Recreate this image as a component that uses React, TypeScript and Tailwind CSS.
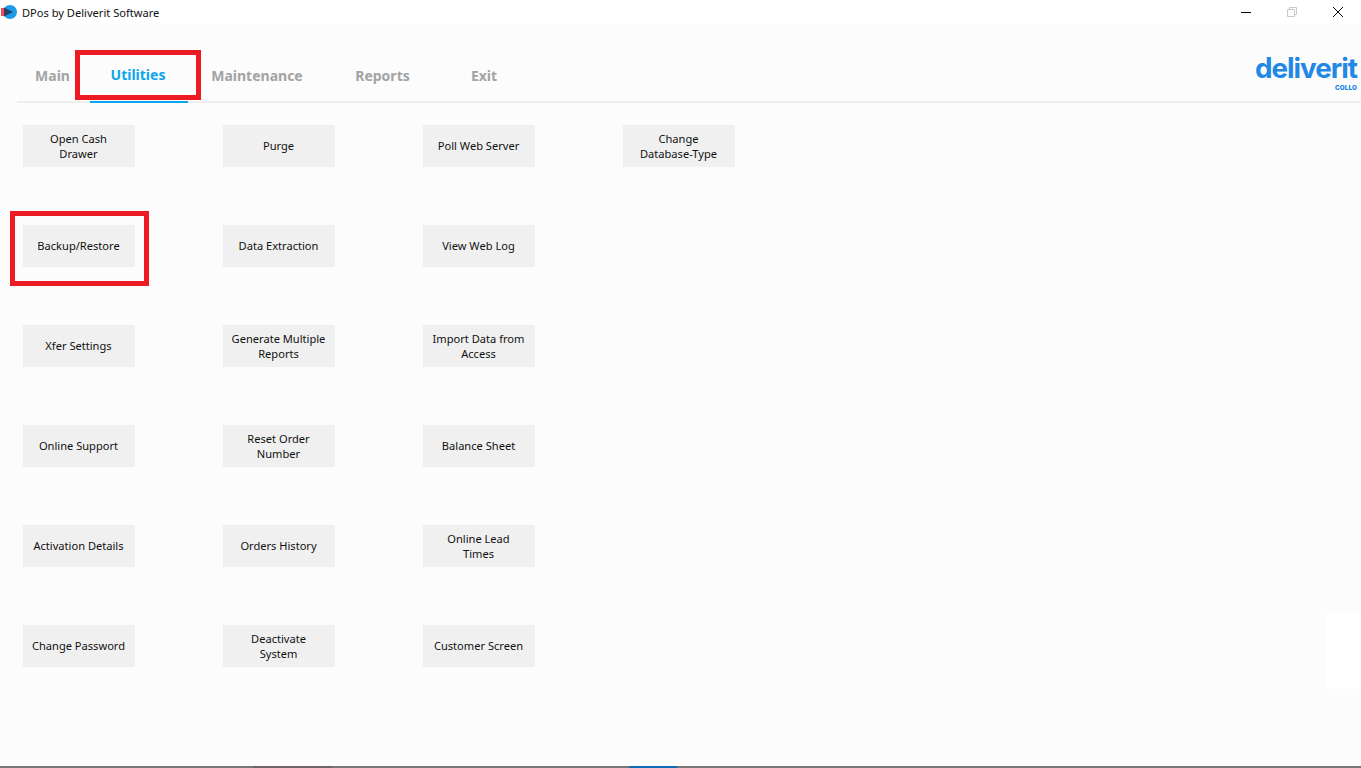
const columns = [
  ["Open Cash\nDrawer", "Backup/Restore", "Xfer Settings", "Online Support", "Activation Details", "Change Password"],
  ["Purge", "Data Extraction", "Generate Multiple\nReports", "Reset Order\nNumber", "Orders History", "Deactivate\nSystem"],
  ["Poll Web Server", "View Web Log", "Import Data from\nAccess", "Balance Sheet", "Online Lead\nTimes", "Customer Screen"],
  ["Change\nDatabase-Type"],
];

const tabs = [
  { label: "Main", w: "w-[73px] pr-[2px]", active: false },
  { label: "Utilities", w: "w-[98px] pr-[2px]", active: true },
  { label: "Maintenance", w: "w-[138px]", active: false },
  { label: "Reports", w: "w-[114px] pr-[1px]", active: false },
  { label: "Exit", w: "w-[90px] pr-[2px]", active: false },
];

function DposIcon() {
  return (
    <svg width="18" height="14" viewBox="0 0 18 14" className="mr-[4px] -mt-[1px]">
      <circle cx="10" cy="7" r="7" fill="#1b9be8" />
      <rect x="1" y="3" width="5" height="8" fill="#e8505b" />
      <path d="M4 2.5 L13 7 L4 11.5 Z" fill="#28406b" />
    </svg>
  );
}

export default function App() {
  return (
    <div className="relative w-[1361px] h-[768px] overflow-hidden bg-[#fcfcfc] font-['Noto_Sans','Open_Sans',sans-serif] text-black">
      <header className="h-[24px] bg-white flex items-center">
        <DposIcon />
        <span className="text-[11.1px] leading-none text-[#111] mt-[1px]">DPos by Deliverit Software</span>
        <div className="ml-auto flex items-center">
          <svg width="12" height="12" viewBox="0 0 12 12" className="mr-[34px]">
            <path d="M1 6.5 H11" stroke="#000" strokeWidth="1" />
          </svg>
          <svg width="12" height="12" viewBox="0 0 12 12" className="mr-[34px]">
            <path d="M1.5 3.5 H8.5 V10.5 H1.5 Z M3.5 3.5 V1.5 H10.5 V8.5 H8.5" fill="none" stroke="#c8c8c8" strokeWidth="1" />
          </svg>
          <svg width="12" height="12" viewBox="0 0 12 12" className="mr-[17px]">
            <path d="M1 1 L11 11 M11 1 L1 11" stroke="#000" strokeWidth="1" />
          </svg>
        </div>
      </header>

      <nav className="relative ml-[17px] mt-[33px] h-[46px] border-b-2 border-[#efefef] flex">
        {tabs.map((t) => (
          <div
            key={t.label}
            className={`${t.w} h-[46px] flex items-center justify-center pb-[10px] text-[14px] font-bold ${
              t.active ? "text-[#0ea5ef] border-b-2 border-[#0ea5ef]" : "text-[#a3a3a3]"
            }`}
          >
            {t.label}
          </div>
        ))}
        <div className="ml-auto mr-[4px] -mt-[2px] flex flex-col items-end">
          <span className="font-['Inter',sans-serif] font-bold text-[27.8px] leading-[27px] tracking-[-1px] text-[#2188e6]">
            deliverit
          </span>
          <span className="font-['Inter',sans-serif] font-black text-[6.2px] leading-[7px] tracking-[0.2px] text-[#2188e6] mt-[2px]">
            COLLO
          </span>
        </div>
      </nav>

      <main className="flex pl-[23px] pt-[22px]">
        {columns.map((col, i) => (
          <div key={i} className="w-[200px] flex flex-col gap-[58px]">
            {col.map((label) => (
              <div
                key={label}
                className="w-[112px] h-[42px] bg-[#f0f0f0] flex items-center justify-center text-center whitespace-pre text-[11.1px] leading-[15px] pb-[1px] pr-[1px] text-[#111]"
              >
                {label}
              </div>
            ))}
          </div>
        ))}
      </main>

      <div className="absolute right-0 top-[613px] w-[36px] h-[76px] bg-white" />

      <div className="absolute left-[75px] top-[50px] w-[126px] h-[50px] border-[5px] border-[#ed1c24]" />
      <div className="absolute left-[10px] top-[211px] w-[139px] h-[75px] border-[5px] border-[#ed1c24]" />

      <div className="absolute left-0 right-0 bottom-0 h-[2px] bg-[#777] flex">
        <div className="ml-[253px] w-[79px] h-full bg-[#6e6666]" />
        <div className="ml-[297px] w-[48px] h-full bg-[#0b6cb5]" />
      </div>
    </div>
  );
}
